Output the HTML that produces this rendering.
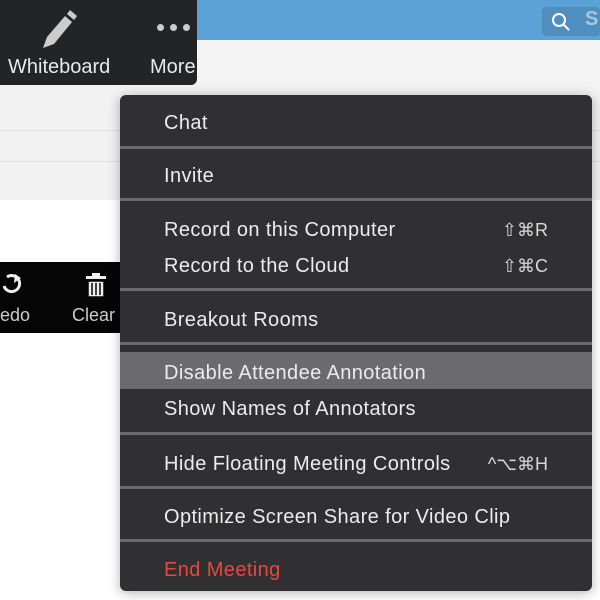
<!DOCTYPE html><html><head><style>
body{margin:0;width:600px;height:600px;overflow:hidden;background:#fff;font-family:"Liberation Sans",sans-serif;position:relative}
.a{position:absolute}
.m{font-size:20px;color:#ececec;left:164px;letter-spacing:0.4px}
.k{font-size:18px;color:#d8d8d8;right:52px}
.s{left:120px;width:472px;height:3px;background:#6a6a6c}
</style></head><body>
<div class="a" style="left:197px;top:0;width:403px;height:40px;background:#5ba3d7"></div>
<div class="a" style="left:542px;top:7px;width:58px;height:29px;background:#4f8fbf;border-radius:4px"></div>
<svg class="a" style="left:550px;top:11px" width="22" height="22"><circle cx="9" cy="9" r="6" fill="none" stroke="#fff" stroke-width="2"/><line x1="13" y1="13" x2="19" y2="19" stroke="#fff" stroke-width="2"/></svg>
<div class="a" style="left:585px;top:8px;font-size:20px;color:#a8c8e0;font-weight:bold">S</div>
<div class="a" style="left:197px;top:40px;width:403px;height:42px;background:#f4f4f4"></div>
<div class="a" style="left:0;top:82px;width:600px;height:118px;background:#f2f2f2"></div>
<div class="a" style="left:0;top:130px;width:600px;height:1px;background:#ddd"></div>
<div class="a" style="left:0;top:161px;width:600px;height:1px;background:#ddd"></div>
<div class="a" style="left:0;top:0;width:197px;height:85px;background:#232426;border-radius:0 0 6px 0"></div>
<svg class="a" style="left:40px;top:8px" width="40" height="42"><path d="M30 2 L37 8 L34 12 L27 6 Z M25 8 L32 14 L14 36 L3 40 L7 29 Z" fill="#ccc"/></svg>
<div class="a" style="left:157px;top:24px;width:36px;height:10px"><span style="position:absolute;left:0;width:7px;height:7px;border-radius:50%;background:#ccc"></span><span style="position:absolute;left:13px;width:7px;height:7px;border-radius:50%;background:#ccc"></span><span style="position:absolute;left:26px;width:7px;height:7px;border-radius:50%;background:#ccc"></span></div>
<div class="a" style="left:8px;top:56px;font-size:20px;color:#e8e8e8">Whiteboard</div>
<div class="a" style="left:150px;top:56px;font-size:20px;color:#e8e8e8">More</div>
<div class="a" style="left:0;top:262px;width:235px;height:71px;background:#050505"></div>
<svg class="a" style="left:0;top:272px" width="26" height="26"><path d="M4 14 A8 8 0 1 0 7 5" fill="none" stroke="#eee" stroke-width="3"/><path d="M18 2 L24 6 L17 11Z" fill="#eee" transform="translate(-3,0)"/></svg>
<svg class="a" style="left:84px;top:273px" width="24" height="26"><rect x="2" y="3" width="20" height="3" fill="#eee"/><rect x="8" y="0" width="8" height="3" fill="#eee"/><path d="M4 8 H20 V24 H4Z M8 10 V22 M12 10 V22 M16 10 V22" fill="#eee" stroke="#050505" stroke-width="1.5"/></svg>
<div class="a" style="left:0;top:305px;font-size:18px;color:#ccc">edo</div>
<div class="a" style="left:72px;top:305px;font-size:18px;color:#ccc">Clear</div>
<div class="a" style="left:120px;top:95px;width:472px;height:496px;background:#303032;border-radius:6px;box-shadow:0 2px 12px rgba(0,0,0,.3)"></div>
<div class="a s" style="top:146px"></div>
<div class="a s" style="top:198px"></div>
<div class="a s" style="top:288px"></div>
<div class="a s" style="top:342px"></div>
<div class="a" style="left:120px;top:352px;width:472px;height:37px;background:#6b6b6d"></div>
<div class="a s" style="top:432px"></div>
<div class="a s" style="top:486px"></div>
<div class="a s" style="top:539px"></div>
<div class="a m" style="top:112px">Chat</div>
<div class="a m" style="top:165px">Invite</div>
<div class="a m" style="top:219px">Record on this Computer</div><div class="a k" style="top:220px">⇧⌘R</div>
<div class="a m" style="top:255px">Record to the Cloud</div><div class="a k" style="top:256px">⇧⌘C</div>
<div class="a m" style="top:309px">Breakout Rooms</div>
<div class="a m" style="top:362px">Disable Attendee Annotation</div>
<div class="a m" style="top:398px">Show Names of Annotators</div>
<div class="a m" style="top:453px">Hide Floating Meeting Controls</div><div class="a k" style="top:454px">^⌥⌘H</div>
<div class="a m" style="top:506px">Optimize Screen Share for Video Clip</div>
<div class="a m" style="top:559px;color:#e8473f">End Meeting</div>
</body></html>
